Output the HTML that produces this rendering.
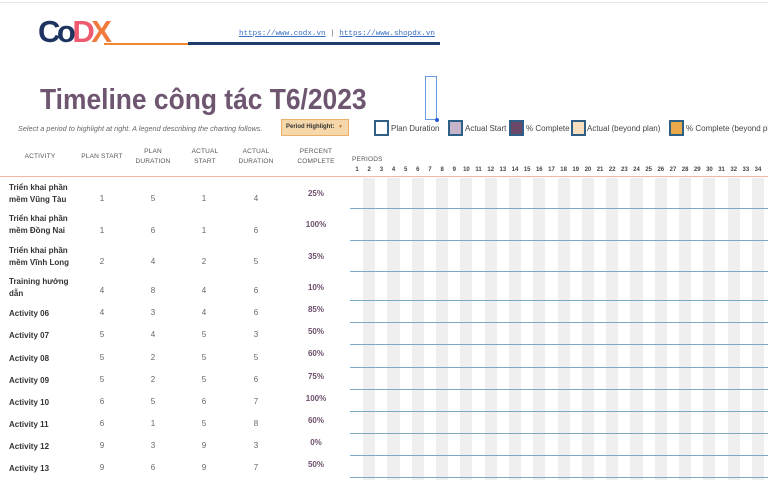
<!DOCTYPE html>
<html><head><meta charset="utf-8"><style>
*{margin:0;padding:0;box-sizing:border-box}
body{width:768px;height:480px;overflow:hidden;background:#fff;position:relative;font-family:"Liberation Sans","DejaVu Sans",sans-serif}
.a{position:absolute}
.hd{position:absolute;font-size:6.5px;color:#555;text-align:center;line-height:10px;letter-spacing:.2px}
.act{position:absolute;left:9px;font-size:8px;font-weight:bold;color:#333;line-height:12px}
.num{position:absolute;font-size:8px;color:#666;text-align:center;width:20px}
.pc{position:absolute;left:300px;width:32px;text-align:center;font-size:8px;font-weight:bold;color:#6b4f6b}
.lg{position:absolute;top:120px;width:15px;height:16px;border:2px solid #2e5f86}
.lt{position:absolute;top:124px;font-size:8px;color:#444;white-space:nowrap}
</style></head><body>
<div class="a" style="left:0;top:0;width:768px;height:3px;border-bottom:1px solid #e6e6e6"></div>
<div class="a" style="left:38px;top:15px;font-size:31px;font-weight:bold;letter-spacing:-3.5px;line-height:34px"><span style="color:#1d3461">Co</span><span style="color:#ee5a6f">D</span><span style="color:#f07a3c">X</span></div>
<div class="a" style="left:104px;top:43px;width:84px;height:2px;background:#f0872f"></div>
<div class="a" style="left:188px;top:42px;width:252px;height:3px;background:#1f3d6b"></div>
<div class="a" style="left:239px;top:30px;font-family:'Liberation Mono',monospace;font-size:7.6px;color:#3a6fc4;white-space:nowrap"><u>https://www.codx.vn</u> <span style="color:#666">|</span> <u>https://www.shopdx.vn</u></div>
<div class="a" style="left:40px;top:83px;font-size:29px;font-weight:bold;color:#6e5670;line-height:34px;white-space:nowrap;transform:scaleX(0.91);transform-origin:0 0">Timeline công tác T6/2023</div>
<div class="a" style="left:425px;top:76px;width:12px;height:44px;border:1px solid #6b9be0"></div>
<div class="a" style="left:435px;top:118px;width:4px;height:4px;border-radius:50%;background:#2a5ad8"></div>
<div class="a" style="left:18px;top:124px;font-size:7.3px;font-style:italic;color:#666;white-space:nowrap">Select a period to highlight at right.  A legend describing the charting follows.</div>
<div class="a" style="left:281px;top:119px;width:68px;height:17px;background:#f6d7a9;border:1px solid #e8b06a;font-size:6px;font-weight:bold;color:#333;padding:4px 0 0 4px;white-space:nowrap">Period Highlight:<span style="position:absolute;right:5px;top:4px;font-size:5px;color:#c07a30">▼</span></div>
<div class="lg" style="left:374px;background:#fff"></div><div class="lt" style="left:391px">Plan Duration</div>
<div class="lg" style="left:448px;background:#c8b4ca"></div><div class="lt" style="left:465px">Actual Start</div>
<div class="lg" style="left:509px;background:#6a4868"></div><div class="lt" style="left:526px">% Complete</div>
<div class="lg" style="left:571px;background:#f5dfbc"></div><div class="lt" style="left:587px">Actual (beyond plan)</div>
<div class="lg" style="left:669px;background:#eaa94a"></div><div class="lt" style="left:686px">% Complete (beyond plan)</div>
<div class="hd" style="left:10px;top:152px;width:60px">ACTIVITY</div>
<div class="hd" style="left:78px;top:152px;width:48px">PLAN START</div>
<div class="hd" style="left:128px;top:147px;width:50px">PLAN<br>DURATION</div>
<div class="hd" style="left:180px;top:147px;width:50px">ACTUAL<br>START</div>
<div class="hd" style="left:231px;top:147px;width:50px">ACTUAL<br>DURATION</div>
<div class="hd" style="left:291px;top:147px;width:50px">PERCENT<br>COMPLETE</div>
<div class="hd" style="left:352px;top:155px;text-align:left">PERIODS</div>
<div class="a" style="left:0;top:176px;width:768px;height:1px;background:#f2b8a4"></div>
<div id="g"></div>
<div id="r"></div>
<script>
var g='',x0=351,w=12.15;
for(var i=0;i<34;i++){var x=x0+i*w;
if(i%2==1)g+='<div class="a" style="left:'+x+'px;top:178px;width:'+w+'px;height:302px;background:#efefef"></div>';
g+='<div class="a" style="left:'+x+'px;top:167px;width:'+w+'px;text-align:center;font-size:6px;font-weight:bold;color:#444">'+(i+1)+'</div>';}
var ys=[208,240,271,300,322,344,367,389,411,433,455,477];
ys.forEach(function(y){g+='<div class="a" style="left:350px;top:'+y+'px;width:418px;height:1px;background:#7fa7c6"></div>';});
document.getElementById('g').innerHTML=g;
var rows=[["Triển khai phần<br>mềm Vũng Tàu",1,5,1,4,"25%"],["Triển khai phần<br>mềm Đồng Nai",1,6,1,6,"100%"],["Triển khai phần<br>mềm Vĩnh Long",2,4,2,5,"35%"],["Training hướng<br>dẫn",4,8,4,6,"10%"],["Activity 06",4,3,4,6,"85%"],["Activity 07",5,4,5,3,"50%"],["Activity 08",5,2,5,5,"60%"],["Activity 09",5,2,5,6,"75%"],["Activity 10",6,5,6,7,"100%"],["Activity 11",6,1,5,8,"60%"],["Activity 12",9,3,9,3,"0%"],["Activity 13",9,6,9,7,"50%"]];
var tops=[177,208,240,271,300,322,344,367,389,411,433,455],s='';
rows.forEach(function(r,i){var t=tops[i],two=r[0].indexOf('<br>')>0,ny=ys[i]-12;
s+='<div class="act" style="top:'+(two?t+5:ny-2)+'px">'+r[0]+'</div>';
[102,153,204,256].forEach(function(c,k){s+='<div class="num" style="left:'+(c-10)+'px;top:'+(ny-2)+'px">'+r[k+1]+'</div>';});
s+='<div class="pc" style="top:'+(t+(i<4?12:5))+'px">'+r[5]+'</div>';});
document.getElementById('r').innerHTML=s;
</script>
</body></html>
